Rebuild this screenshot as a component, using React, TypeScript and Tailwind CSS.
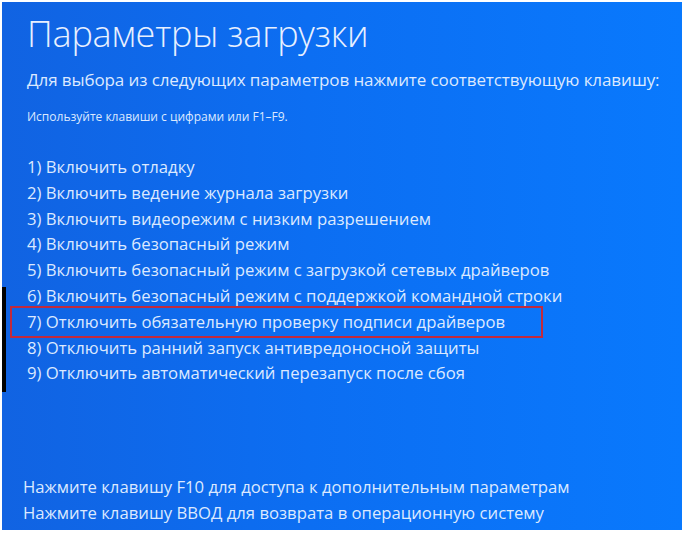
import React from "react";

const items = [
  "1) Включить отладку",
  "2) Включить ведение журнала загрузки",
  "3) Включить видеорежим с низким разрешением",
  "4) Включить безопасный режим",
  "5) Включить безопасный режим с загрузкой сетевых драйверов",
  "6) Включить безопасный режим с поддержкой командной строки",
  "7) Отключить обязательную проверку подписи драйверов",
  "8) Отключить ранний запуск антивредоносной защиты",
  "9) Отключить автоматический перезапуск после сбоя",
];

export default function App() {
  return (
    <div className="w-[684px] h-[534px] bg-white pt-[2px] pl-[2px] pr-[2px] pb-[4px] overflow-hidden">
      <div
        className="relative w-full h-full bg-[linear-gradient(90deg,#1163e2_0%,#0c6ef2_45%,#0979fd_100%)] text-[#dce9ff] flex flex-col pl-[25px] pr-[6px]"
        style={{ fontFamily: '"Open Sans", "Noto Sans", sans-serif' }}
      >
        <div className="absolute left-0 top-[285px] w-[4px] h-[105px] bg-black" />
        <div className="mt-[10px] text-[36px] leading-[44px] font-light text-[#e8f0ff] tracking-[-0.2px]">
          Параметры загрузки
        </div>
        <div className="mt-[14px] text-[17px] leading-[20px] tracking-[-0.1px] whitespace-nowrap">
          Для выбора из следующих параметров нажмите соответствующую клавишу:
        </div>
        <div className="mt-[20px] text-[12px] leading-[14px]">
          Используйте клавиши с цифрами или F1–F9.
        </div>
        <div className="mt-[30px] flex flex-col text-[16.7px] leading-[25.8px]">
          {items.map((t, i) =>
            i === 6 ? (
              <div key={i} className="relative">
                <div className="absolute left-[-17px] top-[-3px] w-[533px] h-[32px] border-2 border-[#c22a3c]" />
                {t}
              </div>
            ) : (
              <div key={i}>{t}</div>
            )
          )}
        </div>
        <div className="flex-1" />
        <div className="flex flex-col text-[16.7px] leading-[26px] mb-[4px] -ml-[4px]">
          <div>Нажмите клавишу F10 для доступа к дополнительным параметрам</div>
          <div>Нажмите клавишу ВВОД для возврата в операционную систему</div>
        </div>
      </div>
    </div>
  );
}
